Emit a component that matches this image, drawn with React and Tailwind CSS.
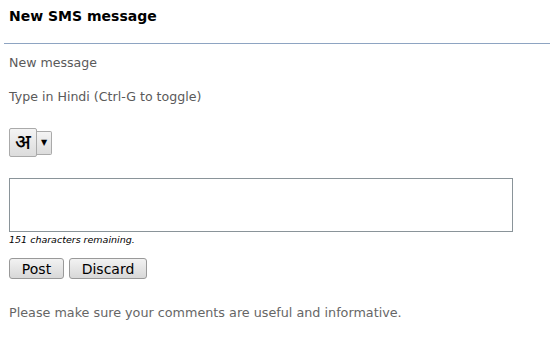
export default function App() {
  return (
    <div className="w-[550px] h-[350px] bg-white relative overflow-hidden" style={{ fontFamily: '"DejaVu Sans", sans-serif' }}>
      <div className="pl-[9px] pt-[7px] h-[43px] text-[14px] font-bold text-black leading-[18px]">New SMS message</div>
      <div className="ml-[4px] h-px bg-[#8ea4c2]"></div>
      <div className="pl-[9px] pt-[11px] text-[12.6px] text-[#5a5a5a] leading-[16px]">New message</div>
      <div className="pl-[9px] pt-[18px] text-[12.6px] text-[#5a5a5a] leading-[16px]">Type in Hindi (Ctrl-G to toggle)</div>
      <div className="pl-[9px] pt-[23px] flex items-center">
        <div className="w-[28px] h-[29px] border border-[#aaa] rounded-[2px] bg-gradient-to-b from-[#f4f4f4] to-[#dcdcdc] flex items-center justify-center text-[20px] font-medium text-black leading-none pb-[2px]" style={{ fontFamily: '"Noto Sans", "DejaVu Sans", sans-serif' }}>अ</div>
        <div className="w-[15px] h-[24px] border border-[#aaa] border-l-0 rounded-r-[2px] bg-gradient-to-b from-[#f4f4f4] to-[#dcdcdc] flex items-center justify-center text-[8px] text-black">▼</div>
      </div>
      <div className="pl-[9px] pt-[21px]">
        <textarea className="block w-[504px] h-[54px] border border-[#8a9499] resize-none outline-none"></textarea>
      </div>
      <div className="pl-[9px] pt-[2px] text-[9.5px] italic text-black leading-[12px]">151 characters remaining.</div>
      <div className="pl-[9px] pt-[12px] flex gap-[5px]">
        <button className="w-[55px] h-[21px] border border-[#999] rounded-[3px] bg-gradient-to-b from-[#f2f2f2] to-[#d8d8d8] text-[14px] text-black leading-none">Post</button>
        <button className="w-[78px] h-[21px] border border-[#999] rounded-[3px] bg-gradient-to-b from-[#f2f2f2] to-[#d8d8d8] text-[14px] text-black leading-none">Discard</button>
      </div>
      <div className="pl-[9px] pt-[26px] text-[12.75px] text-[#666] leading-[16px]">Please make sure your comments are useful and informative.</div>
    </div>
  );
}
